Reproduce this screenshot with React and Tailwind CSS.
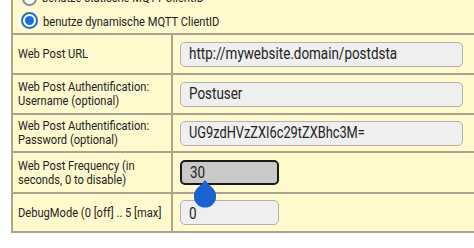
import React from "react";

const Sq = ({ children }) => (
  <span className="inline-block origin-left scale-x-[0.89] whitespace-nowrap">{children}</span>
);

const Row = ({ label, children, h }) => (
  <div className={`flex border-t-2 border-[#aaa48a] ${h}`}>
    <div className="w-[160px] shrink-0 border-r-2 border-[#aaa48a] flex flex-col justify-center pl-[5px] pr-1 text-[12.5px] leading-[14px] text-[#222]">
      {label}
    </div>
    <div className="flex-1 flex items-center pl-[7px]">{children}</div>
  </div>
);

const Input = ({ value, w = "w-[283px]", focus, sq = "scale-x-[0.84]" }) => (
  <div
    className={`${w} h-[25px] rounded-[5px] flex items-center pl-[8px] text-[16px] text-[#222] ${
      focus ? "bg-[#c9c9c9] border-2 border-[#1a1a1a]" : "bg-[#efeff0] border border-[#b4b2a8]"
    }`}
  >
    <span className={`inline-block origin-left whitespace-nowrap ${sq}`}>{value}</span>
  </div>
);

export default function App() {
  return (
    <div className="w-[474px] h-[248px] bg-white overflow-hidden" style={{ fontFamily: "Roboto, 'Noto Sans', sans-serif" }}>
      <div className="relative ml-[11px] -mt-[11px] w-[475px] bg-[#fefacd] border-l-2 border-b-2 border-[#aaa48a]">
        <div className="h-[44px] flex flex-col justify-end pb-[5px] pl-[8px] gap-[6px] text-[12.5px] text-[#222]">
          <div className="flex items-center gap-[5px] h-[16px]">
            <span className="w-[15px] h-[15px] ml-[1px] rounded-full border-2 border-[#8a8a8a] bg-white" />
            <Sq>benutze statische MQTT ClientID</Sq>
          </div>
          <div className="flex items-center gap-[5px] h-[16px]">
            <span className="w-[17px] h-[17px] rounded-full border-2 border-[#1a6ce0] bg-white flex items-center justify-center">
              <span className="w-[9px] h-[9px] rounded-full bg-[#1a6ce0]" />
            </span>
            <span className="mt-[4px]">
              <Sq>benutze dynamische MQTT ClientID</Sq>
            </span>
          </div>
        </div>
        <Row label={<Sq>Web Post URL</Sq>} h="h-[40px]">
          <Input value="http://mywebsite.domain/postdsta" />
        </Row>
        <Row label={<><Sq>Web Post Authentification:</Sq><Sq>Username (optional)</Sq></>} h="h-[40px]">
          <Input value="Postuser" />
        </Row>
        <Row label={<><Sq>Web Post Authentification:</Sq><Sq>Password (optional)</Sq></>} h="h-[38px]">
          <Input value="UG9zdHVzZXI6c29tZXBhc3M=" sq="scale-x-[0.8]" />
        </Row>
        <Row label={<><Sq>Web Post Frequency (in</Sq><Sq>seconds, 0 to disable)</Sq></>} h="h-[41px]">
          <Input value="30" w="w-[99px]" focus />
        </Row>
        <Row label={<Sq>DebugMode (0 [off] .. 5 [max]</Sq>} h="h-[39px]">
          <div className="w-[99px] h-[25px] rounded-[5px] bg-[#efeff0] border border-[#b4b2a8] flex items-end pl-[8px] text-[16px] leading-[20px] text-[#222]">
            <span className="inline-block origin-left scale-x-[0.84]">0</span>
          </div>
        </Row>
        <svg className="absolute left-[179px] top-[191px]" width="26" height="28" viewBox="0 0 26 28">
          <path d="M13 0 L21 9 A11 11 0 1 1 5 9 Z" fill="#1a62cf" />
          <circle cx="13" cy="16" r="11" fill="#1a62cf" />
        </svg>
      </div>
    </div>
  );
}
